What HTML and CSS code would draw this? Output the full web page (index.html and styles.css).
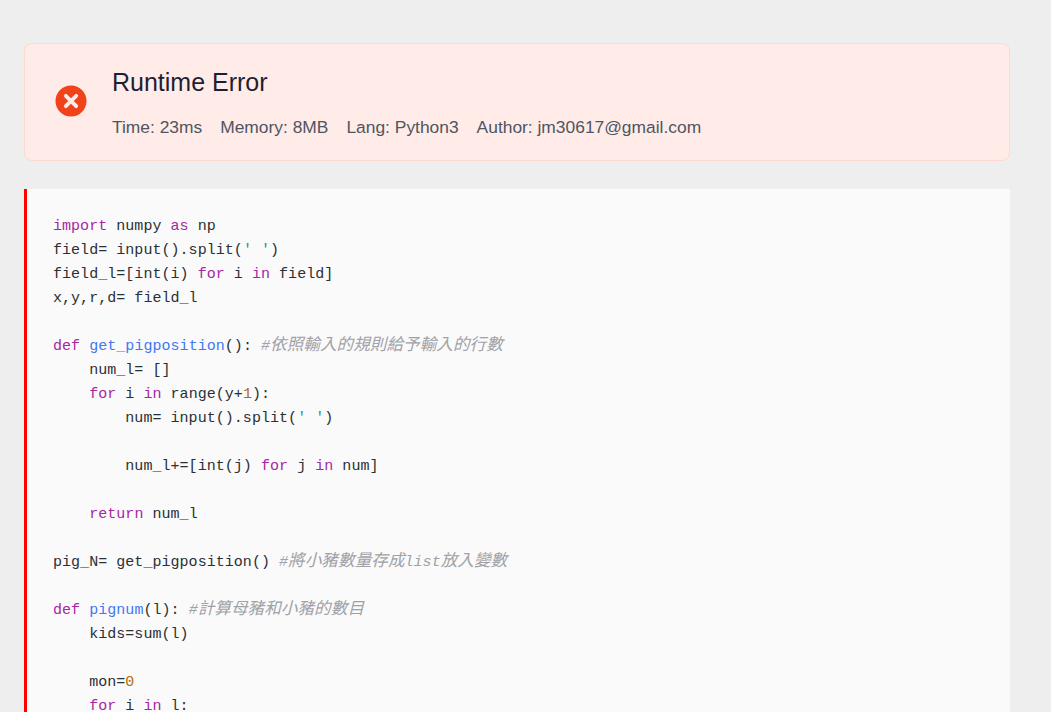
FILE: index.html
```html
<!DOCTYPE html>
<html lang="en">
<head>
    <meta charset="UTF-8">
    <meta name="viewport" content="width=device-width, initial-scale=1.0">
    <title>Runtime Error</title>
    <link rel="stylesheet" href="styles.css">
</head>
<body>
    <div class="container">
        <div class="result-card">
            <svg class="result-icon" viewBox="0 0 32 32" aria-hidden="true">
                <circle cx="16" cy="16" r="15.5" fill="#f0431a"/>
                <path d="M10.8 10.8 L21.2 21.2 M21.2 10.8 L10.8 21.2" stroke="#ffece8" stroke-width="3.8" stroke-linecap="round"/>
            </svg>
            <div class="result-body">
                <h1>Runtime Error</h1>
                <div class="result-meta">
                    <span>Time: 23ms</span>
                    <span>Memory: 8MB</span>
                    <span>Lang: Python3</span>
                    <span>Author: jm30617@gmail.com</span>
                </div>
            </div>
        </div>
        <pre class="code"><code><span class="kw">import</span> numpy <span class="kw">as</span> np
field= input().split(<span class="str">' '</span>)
field_l=[int(i) <span class="kw">for</span> i <span class="kw">in</span> field]
x,y,r,d= field_l

<span class="kw">def</span> <span class="fn">get_pigposition</span>(): <span class="cm">#<span class="zh">依照輸入的規則給予輸入的行數</span></span>
    num_l= []
    <span class="kw">for</span> i <span class="kw">in</span> range(y+<span class="num">1</span>):
        num= input().split(<span class="str">' '</span>)

        num_l+=[int(j) <span class="kw">for</span> j <span class="kw">in</span> num]

    <span class="kw">return</span> num_l

pig_N= get_pigposition() <span class="cm">#<span class="zh">將小豬數量存成</span>list<span class="zh">放入變數</span></span>

<span class="kw">def</span> <span class="fn">pignum</span>(l): <span class="cm">#<span class="zh">計算母豬和小豬的數目</span></span>
    kids=sum(l)

    mon=<span class="num">0</span>
    <span class="kw">for</span> i <span class="kw">in</span> l:</code></pre>
    </div>
</body>
</html>
```

FILE: styles.css
```css
html, body {
    height: 100%;
    overflow: hidden;
}
body {
    font-family: "Liberation Sans", Arial, sans-serif;
    background-color: #eeeeee;
    margin: 0;
    padding: 0;
}
.container {
    padding: 43px 41px 0 24px;
}
.result-card {
    display: flex;
    align-items: center;
    gap: 25px;
    height: 118px;
    box-sizing: border-box;
    padding: 0 30px;
    margin-bottom: 28px;
    background: #ffece8;
    border: 1px solid #ffd9d0;
    border-radius: 8px;
}
.result-icon {
    width: 32px;
    height: 32px;
    flex-shrink: 0;
    margin-bottom: 3px;
}
.result-body h1 {
    margin: 0 0 16px;
    font-size: 25px;
    line-height: 33px;
    font-weight: 400;
    color: #1f1f33;
}
.result-meta {
    display: flex;
    gap: 18px;
    font-size: 17.4px;
    line-height: 24px;
    color: #4f5560;
}
.code {
    margin: 0;
    padding: 26px 26px 24px;
    background: #fafafa;
    border-left: 3px solid #ff0000;
    font-family: "Liberation Mono", "Noto Sans CJK TC", monospace;
    font-size: 15px;
    letter-spacing: 0.04px;
    line-height: 24px;
    color: #2b2f36;
}
.code code {
    font-family: inherit;
}
.kw {
    color: #a626a4;
}
.fn {
    color: #4078f2;
}
.str {
    color: #17a08c;
}
.num {
    color: #b76b01;
}
.cm {
    color: #a0a1a7;
    font-style: italic;
}
.zh {
    font-family: "Noto Sans CJK TC", sans-serif;
    font-size: 16.6px;
    line-height: 1;
}
```
